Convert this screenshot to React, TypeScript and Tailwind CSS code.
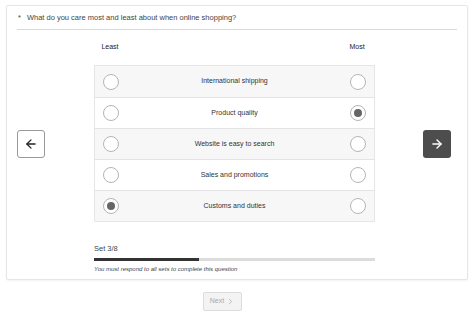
import { ArrowLeft, ArrowRight, ChevronRight } from 'lucide-react';

const items = [
  { label: 'International shipping', least: false, most: false },
  { label: 'Product quality', least: false, most: true },
  { label: 'Website is easy to search', least: false, most: false },
  { label: 'Sales and promotions', least: false, most: false },
  { label: 'Customs and duties', least: true, most: false },
];

function Radio({ checked }: { checked: boolean }) {
  return (
    <span className="w-[16px] h-[16px] rounded-full border border-[#b5b5b5] bg-white flex items-center justify-center">
      {checked && <span className="w-[8px] h-[8px] rounded-full bg-[#666]" />}
    </span>
  );
}

export default function App() {
  return (
    <div className="w-[474px] h-[315px] bg-white overflow-hidden font-['Liberation_Sans',Arial,sans-serif] text-[#333]">
      {/* Card */}
      <div className="mx-[6px] mt-[5px] h-[275px] border border-[#e6e6e6] rounded-[2px] shadow-[0_1px_2px_rgba(0,0,0,0.05)] px-[10px]">
        {/* Question */}
        <div className="h-[24px] flex items-center border-b border-[#d9d9d9] pl-[1px] text-[7.5px] text-[#444]">
          <span className="mr-[6px]">*</span>
          <span>What do you care most and least about when online shopping?</span>
        </div>

        {/* Column headers */}
        <div className="ml-[77px] w-[281px] h-[35px] flex items-center justify-between text-[7px] text-[#222]">
          <span className="w-[32px] text-center">Least</span>
          <span className="w-[36px] text-center">Most</span>
        </div>

        {/* Table with arrows */}
        <div className="flex items-center">
          <button className="w-[28px] h-[28px] rounded-[3px] border border-[#999] bg-white flex items-center justify-center">
            <ArrowLeft size={14} strokeWidth={2.2} className="text-[#222]" />
          </button>
          <div className="ml-[49px] w-[281px] border border-[#e6e6e6]">
            {items.map((item, i) => (
              <div
                key={item.label}
                className={`h-[31px] flex items-center px-[8px] ${i > 0 ? 'border-t border-[#e3e3e3]' : ''} ${i % 2 === 0 ? 'bg-[#f7f7f7]' : 'bg-white'}`}
              >
                <Radio checked={item.least} />
                <span className="flex-1 text-center text-[7px] text-[#333]">{item.label}</span>
                <Radio checked={item.most} />
              </div>
            ))}
          </div>
          <button className="ml-[48px] w-[28px] h-[28px] rounded-[3px] bg-[#4d4d4d] flex items-center justify-center">
            <ArrowRight size={14} strokeWidth={2.4} className="text-white" />
          </button>
        </div>

        {/* Progress */}
        <div className="ml-[77px] w-[281px] mt-[21px]">
          <div className="text-[7.5px] text-[#444]">Set 3/8</div>
          <div className="mt-[4px] h-[3px] bg-[#dcdcdc]">
            <div className="h-full bg-[#333]" style={{ width: `${(3 / 8) * 100}%` }} />
          </div>
          <div className="mt-[4px] text-[6px] italic text-[#444]">You must respond to all sets to complete this question</div>
        </div>
      </div>

      {/* Next */}
      <div className="mt-[12px] ml-[203px]">
        <button className="w-[39px] h-[19px] border border-[#dcdcdc] bg-[#f3f3f3] rounded-[2px] flex items-center justify-center gap-[2px] text-[7px] text-[#aaa]">
          Next
          <ChevronRight size={9} strokeWidth={2} />
        </button>
      </div>
    </div>
  );
}
